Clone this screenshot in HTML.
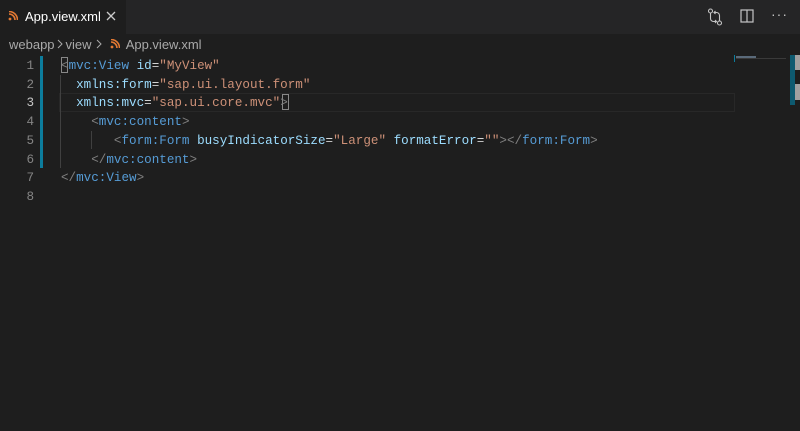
<!DOCTYPE html>
<html><head><style>
body{margin:0;width:800px;height:431px;background:#1e1e1e;overflow:hidden;font-family:"Liberation Sans",sans-serif;position:relative}
.tabs{position:absolute;top:0;left:0;width:800px;height:34px;background:#252526}
.tab{position:absolute;left:0;top:0;width:126px;height:34px;background:#1e1e1e;color:#fff;font-size:13px}
.bc{position:absolute;top:37px;left:9px;color:#a9a9a9;font-size:13px}
.code{position:absolute;left:0;top:57px;font-family:"Liberation Mono",monospace;font-size:12.6px}
.ln{position:absolute;left:0;width:34px;text-align:right;color:#858585;height:18.7px;line-height:18.7px}
.l{position:absolute;left:61px;white-space:pre;height:18.7px;line-height:18.7px;color:#d4d4d4}
.t{color:#569cd6}.g{color:#808080}.a{color:#9cdcfe}.s{color:#ce9178}
</style></head><body>
<div class="tabs"><div class="tab">
<svg style="position:absolute;left:8px;top:11px" width="10" height="10"><g fill="none" stroke="#e37933" stroke-width="1.6"><path d="M1 3a6 6 0 0 1 6 6"/><path d="M1 0.5a8.5 8.5 0 0 1 8.5 8.5"/></g><circle cx="2" cy="8" r="1.4" fill="#e37933"/></svg>
<span style="position:absolute;left:25px;top:9px">App.view.xml</span>
<svg style="position:absolute;left:106px;top:11px" width="10" height="10"><path d="M1 1L9 9M9 1L1 9" stroke="#ccc" stroke-width="1.3"/></svg>
</div>
<svg style="position:absolute;left:707px;top:8px" width="16" height="18" fill="none" stroke="#c5c5c5" stroke-width="1.1"><circle cx="3.5" cy="3" r="2"/><circle cx="12.5" cy="15" r="2"/><path d="M3.5 5v5.5a3 3 0 0 0 3 3H9M8 12l1.5 1.5L8 15M12.5 13V7.5a3 3 0 0 0-3-3H7M8.5 3L7 4.5 8.5 6"/></svg>
<svg style="position:absolute;left:740px;top:9px" width="14" height="15" fill="none" stroke="#c5c5c5" stroke-width="1.2"><rect x="1" y="1" width="12" height="12"/><path d="M7 1v12"/></svg>
<span style="position:absolute;left:771px;top:6px;color:#c5c5c5;font-size:14px;letter-spacing:1px">···</span>
</div>
<div class="bc">webapp<svg width="7" height="10" style="margin:0 2px"><path d="M1 1l4 4-4 4" fill="none" stroke="#a9a9a9"/></svg>view <svg width="7" height="10" style="margin:0 1px"><path d="M1 1l4 4-4 4" fill="none" stroke="#a9a9a9"/></svg> <svg width="10" height="10" style="margin:0 3px 0 2px"><g fill="none" stroke="#e37933" stroke-width="1.6"><path d="M1 3a6 6 0 0 1 6 6"/><path d="M1 0.5a8.5 8.5 0 0 1 8.5 8.5"/></g><circle cx="2" cy="8" r="1.4" fill="#e37933"/></svg> App.view.xml</div>
<div style="position:absolute;left:40px;top:56px;width:3px;height:112px;background:#0c7d9d"></div>
<div style="position:absolute;left:59px;top:93px;width:674px;height:17px;border:1px solid #282828"></div>
<div style="position:absolute;left:60px;top:75px;width:1px;height:93px;background:#404040"></div>
<div style="position:absolute;left:91px;top:131px;width:1px;height:18px;background:#404040"></div>
<div style="position:absolute;left:61px;top:57px;width:7px;height:16px;border:1px solid #888;box-sizing:border-box"></div>
<div style="position:absolute;left:282px;top:94px;width:7px;height:16px;border:1px solid #888;box-sizing:border-box"></div>
<div class="code">
<div class="ln" style="top:0">1</div><div class="ln" style="top:18.7px">2</div><div class="ln" style="top:37.4px;color:#c6c6c6">3</div><div class="ln" style="top:56.1px">4</div><div class="ln" style="top:74.8px">5</div><div class="ln" style="top:93.5px">6</div><div class="ln" style="top:112.2px">7</div><div class="ln" style="top:130.9px">8</div>
<div class="l" style="top:0"><span class="g">&lt;</span><span class="t">mvc:View</span> <span class="a">id</span>=<span class="s">"MyView"</span></div>
<div class="l" style="top:18.7px">  <span class="a">xmlns:form</span>=<span class="s">"sap.ui.layout.form"</span></div>
<div class="l" style="top:37.4px">  <span class="a">xmlns:mvc</span>=<span class="s">"sap.ui.core.mvc"</span><span class="g">&gt;</span></div>
<div class="l" style="top:56.1px">    <span class="g">&lt;</span><span class="t">mvc:content</span><span class="g">&gt;</span></div>
<div class="l" style="top:74.8px">       <span class="g">&lt;</span><span class="t">form:Form</span> <span class="a">busyIndicatorSize</span>=<span class="s">"Large"</span> <span class="a">formatError</span>=<span class="s">""</span><span class="g">&gt;&lt;/</span><span class="t">form:Form</span><span class="g">&gt;</span></div>
<div class="l" style="top:93.5px">    <span class="g">&lt;/</span><span class="t">mvc:content</span><span class="g">&gt;</span></div>
<div class="l" style="top:112.2px"><span class="g">&lt;/</span><span class="t">mvc:View</span><span class="g">&gt;</span></div>
</div>
<div style="position:absolute;left:734px;top:55px;width:1px;height:7px;background:#0c7d9d"></div>
<div style="position:absolute;left:736px;top:56px;width:20px;height:2px;background:#5a6a7a"></div>
<div style="position:absolute;left:736px;top:58px;width:50px;height:1px;background:#3a3a3a"></div>
<div style="position:absolute;left:790px;top:55px;width:5px;height:50px;background:#0e5a70"></div>
<div style="position:absolute;left:795px;top:55px;width:5px;height:15px;background:#a0a0a0"></div>
<div style="position:absolute;left:795px;top:84px;width:5px;height:16px;background:#a0a0a0"></div>
</body></html>
